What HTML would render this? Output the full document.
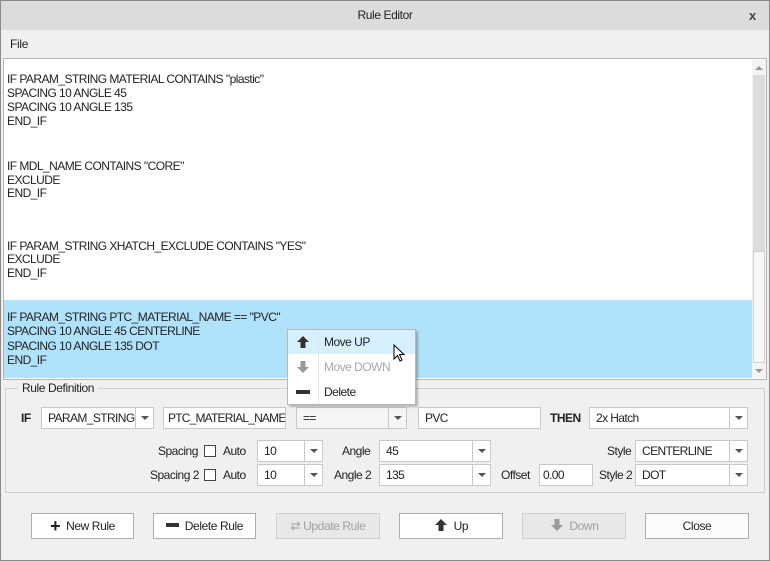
<!DOCTYPE html>
<html><head><style>
*{margin:0;padding:0;box-sizing:border-box}
body{width:770px;height:561px;background:#f0f0f0;font-family:"Liberation Sans",sans-serif;font-size:12px;color:#222;position:relative;overflow:hidden}
.a{position:absolute}
.t{position:absolute;left:7px;white-space:nowrap;letter-spacing:-0.55px;font-size:12px;line-height:14px}
.box{position:absolute;background:#fff;border:1px solid #c8c8c8;height:22px;line-height:20px;padding-left:6px;white-space:nowrap;letter-spacing:-0.6px;overflow:hidden}
.dd{position:absolute;right:0;top:0;width:18px;height:20px;border-left:1px solid #c8c8c8;background:inherit}
.dd:after{content:"";position:absolute;left:5px;top:8px;border-left:4px solid transparent;border-right:4px solid transparent;border-top:4px solid #555}
.lbl{position:absolute;white-space:nowrap;letter-spacing:-0.5px;line-height:20px}
.cb{position:absolute;width:12px;height:12px;border:1px solid #444;background:#fff}
.btn{position:absolute;top:513px;height:26px;border:1px solid #adadad;background:#fff;line-height:24px;text-align:center;letter-spacing:-0.4px}
.dis{background:#e8e8e8;border-color:#d0d0d0;color:#a0a0a0}
</style></head><body>
<div class="a" style="left:0;top:0;width:770px;height:561px;border:1px solid #8a8a8a"></div>
<div class="a" style="left:1px;top:1px;width:768px;height:29px;background:#dcdcdc;text-align:center;line-height:29px;letter-spacing:-0.4px">Rule Editor</div>
<div class="a" style="left:749px;top:8px;font-size:13px;font-weight:bold;color:#444">x</div>
<div class="a" style="left:10px;top:37px;letter-spacing:-0.3px">File</div>
<div class="a" style="left:3px;top:58px;width:764px;height:322px;background:#fff;border:1px solid #b5b5b5"></div>
<div class="a" style="left:4px;top:300px;width:748px;height:78px;background:#b0e2fb"></div>
<div class="a" style="left:752px;top:60px;width:14px;height:318px;background:#f3f3f3"></div>
<div class="a" style="left:753px;top:75px;width:12px;height:176px;background:#dcdcdc"></div>
<div class="a" style="left:753px;top:251px;width:12px;height:112px;background:#f7f7f7;border:1px solid #d0d0d0"></div>
<div class="a" style="left:755px;top:66px;border-left:4px solid transparent;border-right:4px solid transparent;border-bottom:4px solid #999"></div>
<div class="a" style="left:755px;top:369px;border-left:4px solid transparent;border-right:4px solid transparent;border-top:4px solid #999"></div>
<div class="t" style="top:72px">IF PARAM_STRING MATERIAL CONTAINS "plastic"</div>
<div class="t" style="top:86px">SPACING 10 ANGLE 45</div>
<div class="t" style="top:100px">SPACING 10 ANGLE 135</div>
<div class="t" style="top:114px">END_IF</div>
<div class="t" style="top:159px">IF MDL_NAME CONTAINS "CORE"</div>
<div class="t" style="top:173px">EXCLUDE</div>
<div class="t" style="top:186px">END_IF</div>
<div class="t" style="top:239px">IF PARAM_STRING XHATCH_EXCLUDE CONTAINS "YES"</div>
<div class="t" style="top:252px">EXCLUDE</div>
<div class="t" style="top:266px">END_IF</div>
<div class="t" style="top:310px">IF PARAM_STRING PTC_MATERIAL_NAME == "PVC"</div>
<div class="t" style="top:324px">SPACING 10 ANGLE 45 CENTERLINE</div>
<div class="t" style="top:339px">SPACING 10 ANGLE 135 DOT</div>
<div class="t" style="top:353px">END_IF</div>

<div class="a" style="left:5px;top:388px;width:760px;height:105px;border:1px solid #d0d0d0"></div>
<div class="a" style="left:18px;top:381px;background:#f0f0f0;padding:0 4px;letter-spacing:-0.4px">Rule Definition</div>
<div class="lbl" style="left:21px;top:408px;font-weight:bold">IF</div>
<div class="box" style="left:41px;top:407px;width:113px">PARAM_STRING<div class="dd"></div></div>
<div class="box" style="left:163px;top:407px;width:123px;padding-left:4px;letter-spacing:-0.8px">PTC_MATERIAL_NAME</div>
<div class="box" style="left:296px;top:407px;width:111px;background:#f5f5f5">==<div class="dd"></div></div>
<div class="box" style="left:418px;top:407px;width:123px">PVC</div>
<div class="lbl" style="left:550px;top:408px;font-weight:bold">THEN</div>
<div class="box" style="left:589px;top:407px;width:159px">2x Hatch<div class="dd"></div></div>
<div class="lbl" style="left:158px;top:441px">Spacing</div><div class="cb" style="left:204px;top:445px"></div><div class="lbl" style="left:223px;top:441px">Auto</div>
<div class="lbl" style="left:150px;top:465px">Spacing 2</div><div class="cb" style="left:204px;top:469px"></div><div class="lbl" style="left:223px;top:465px">Auto</div>
<div class="box" style="left:257px;top:440px;width:66px">10<div class="dd"></div></div>
<div class="box" style="left:257px;top:464px;width:66px">10<div class="dd"></div></div>
<div class="lbl" style="left:342px;top:441px">Angle</div>
<div class="lbl" style="left:334px;top:465px">Angle 2</div>
<div class="box" style="left:379px;top:440px;width:112px">45<div class="dd"></div></div>
<div class="box" style="left:379px;top:464px;width:112px">135<div class="dd"></div></div>
<div class="lbl" style="left:501px;top:465px">Offset</div>
<div class="box" style="left:539px;top:464px;width:54px;padding-left:3px">0.00</div>
<div class="lbl" style="left:607px;top:441px">Style</div>
<div class="lbl" style="left:599px;top:465px">Style 2</div>
<div class="box" style="left:635px;top:440px;width:113px">CENTERLINE<div class="dd"></div></div>
<div class="box" style="left:635px;top:464px;width:113px">DOT<div class="dd"></div></div>

<div class="btn" style="left:31px;width:103px"><span style="font-weight:bold;font-size:18px;vertical-align:-2px">+</span>&nbsp; New Rule</div>
<div class="btn" style="left:153px;width:103px"><span style="display:inline-block;width:13px;height:4px;background:#333;vertical-align:3px"></span>&nbsp; Delete Rule</div>
<div class="btn dis" style="left:276px;width:104px">⇄ Update Rule</div>
<div class="btn" style="left:399px;width:104px"><svg width="14" height="14" style="vertical-align:-2px"><path d="M7 1 L13 7 H9.5 V13 H4.5 V7 H1 Z" fill="#333"/></svg>&nbsp; Up</div>
<div class="btn dis" style="left:522px;width:104px"><svg width="14" height="14" style="vertical-align:-2px"><path d="M7 13 L13 7 H9.5 V1 H4.5 V7 H1 Z" fill="#999"/></svg>&nbsp; Down</div>
<div class="btn" style="left:645px;width:104px;background:#fcfcfc">Close</div>

<div class="a" style="left:287px;top:329px;width:129px;height:76px;background:#fff;border:1px solid #b8b8b8;box-shadow:2px 2px 2px rgba(0,0,0,.25)"></div>
<div class="a" style="left:288px;top:330px;width:127px;height:24px;background:#d6f1fd"></div>
<div class="a" style="left:318px;top:330px;width:1px;height:74px;background:#e5e5e5"></div>
<div class="lbl" style="left:324px;top:332px">Move UP</div>
<div class="lbl" style="left:324px;top:357px;color:#a8a8a8">Move DOWN</div>
<div class="lbl" style="left:324px;top:382px">Delete</div>
<svg class="a" style="left:296px;top:335px" width="14" height="14"><path d="M7 1 L13 7 H9.5 V13 H4.5 V7 H1 Z" fill="#333"/></svg>
<svg class="a" style="left:296px;top:360px" width="14" height="14"><path d="M7 13 L13 7 H9.5 V1 H4.5 V7 H1 Z" fill="#999"/></svg>
<div class="a" style="left:296px;top:390px;width:14px;height:4px;background:#333"></div>
<svg class="a" style="left:393px;top:344px" width="14" height="20"><path d="M1 1 V15 L4.5 11.5 L7 17 L9 16 L6.5 10.5 H11 Z" fill="#fff" stroke="#000" stroke-width="1"/></svg>
</body></html>
